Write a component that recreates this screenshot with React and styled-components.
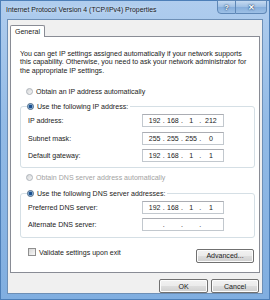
import styled, { createGlobalStyle } from "styled-components";

const GlobalStyle = createGlobalStyle`
  html, body {
    margin: 0;
    padding: 0;
    background: #ffffff;
  }
  * {
    box-sizing: border-box;
  }
`;

const ipRows = [
  { label: "IP address:", value: ["192", "168", "1", "212"] },
  { label: "Subnet mask:", value: ["255", "255", "255", "0"] },
  { label: "Default gateway:", value: ["192", "168", "1", "1"] },
];

const dnsRows = [
  { label: "Preferred DNS server:", value: ["192", "168", "1", "1"] },
  { label: "Alternate DNS server:", value: ["", "", "", ""] },
];

function IpField({ value }) {
  return (
    <Field>
      {value.map((part, i) => (
        <Octet key={i}>
          <span>{part}</span>
          {i < 3 && <Dot>.</Dot>}
        </Octet>
      ))}
    </Field>
  );
}

function Radio({ checked, disabled, children }) {
  return (
    <RadioLabel disabled={disabled}>
      <RadioCircle checked={checked} />
      {children}
    </RadioLabel>
  );
}

export default function App() {
  return (
    <>
      <GlobalStyle />
      <Window>
        <TitleBar>
          <Title>Internet Protocol Version 4 (TCP/IPv4) Properties</Title>
          <Controls>
            <CtrlButton wide={false}>?</CtrlButton>
            <CtrlButton wide>✕</CtrlButton>
          </Controls>
        </TitleBar>
        <Body>
          <Tabs>
            <Tab>General</Tab>
          </Tabs>
          <Panel>
            <Intro>
              You can get IP settings assigned automatically if your network supports
              this capability. Otherwise, you need to ask your network administrator
              for the appropriate IP settings.
            </Intro>
            <Standalone top={12}>
              <Radio>Obtain an IP address automatically</Radio>
            </Standalone>
            <Group top={6} bottom={2}>
              <Legend>
                <Radio checked>Use the following IP address:</Radio>
              </Legend>
              {ipRows.map((row) => (
                <Row key={row.label}>
                  <RowLabel>{row.label}</RowLabel>
                  <IpField value={row.value} />
                </Row>
              ))}
            </Group>
            <Standalone top={5}>
              <Radio disabled>Obtain DNS server address automatically</Radio>
            </Standalone>
            <Group top={7} bottom={3}>
              <Legend>
                <Radio checked>Use the following DNS server addresses:</Radio>
              </Legend>
              {dnsRows.map((row) => (
                <Row key={row.label}>
                  <RowLabel>{row.label}</RowLabel>
                  <IpField value={row.value} />
                </Row>
              ))}
            </Group>
            <BottomRow>
              <CheckLabel>
                <CheckBox />
                Validate settings upon exit
              </CheckLabel>
              <Button width={58}>Advanced...</Button>
            </BottomRow>
          </Panel>
          <Footer>
            <Button width={49}>OK</Button>
            <Button width={48}>Cancel</Button>
          </Footer>
        </Body>
      </Window>
    </>
  );
}

const Window = styled.div`
  width: 270px;
  height: 300px;
  display: flex;
  flex-direction: column;
  padding: 0 6px 5px 6px;
  background: linear-gradient(180deg, #b0cdee 0%, #93bbe6 40%, #80aee0 100%);
  border: 1px solid #4d7fb8;
  font-family: "Liberation Sans", Arial, sans-serif;
  font-size: 7.05px;
  color: #1b1b1b;
`;

const TitleBar = styled.div`
  height: 18px;
  display: flex;
  align-items: flex-start;
  justify-content: space-between;
`;

const Title = styled.div`
  padding-top: 5px;
  margin-left: -1px;
  font-size: 6.9px;
  color: #1a1a1a;
  text-shadow: 0 0 4px #e4effa;
`;

const Controls = styled.div`
  display: flex;
  margin-top: -1px;
  margin-right: -4px;
`;

const CtrlButton = styled.div`
  width: ${(p) => (p.wide ? 31 : 19)}px;
  height: 14px;
  display: flex;
  align-items: center;
  justify-content: center;
  border: 1px solid #5f88b7;
  border-left: ${(p) => (p.wide ? "none" : "1px solid #5f88b7")};
  border-radius: ${(p) => (p.wide ? "0 0 4px 0" : "0 0 0 4px")};
  background: linear-gradient(180deg, #c5daf1 0%, #9ebfe4 50%, #86aedb 51%, #9dc0e6 100%);
  color: #ffffff;
  font-size: 8px;
  font-weight: bold;
  text-shadow: 0 0 2px #1d3f68, 0 0 1px #1d3f68;
`;

const Body = styled.div`
  flex: 1;
  display: flex;
  flex-direction: column;
  padding: 5px 2px 0 2px;
  background: #f0f0f0;
  border: 1px solid #6d8fb6;
`;

const Tabs = styled.div`
  display: flex;
  height: 11px;
`;

const Tab = styled.div`
  width: 35px;
  height: 12px;
  display: flex;
  align-items: center;
  justify-content: center;
  background: #ffffff;
  border: 1px solid #898c95;
  border-bottom: none;
  border-radius: 2px 2px 0 0;
  position: relative;
  z-index: 1;
`;

const Panel = styled.div`
  height: 237px;
  display: flex;
  flex-direction: column;
  padding: 13px 9px 0 9px;
  background: #ffffff;
  border: 1px solid #898c95;
`;

const Intro = styled.p`
  margin: 0;
  line-height: 8.4px;
  width: 232px;
`;

const Standalone = styled.div`
  margin: ${(p) => p.top}px 0 0 6px;
  height: 9px;
  display: flex;
  align-items: center;
`;

const RadioLabel = styled.label`
  display: flex;
  align-items: center;
  gap: 3px;
  color: ${(p) => (p.disabled ? "#a3a3a3" : "#1b1b1b")};
  white-space: nowrap;
`;

const RadioCircle = styled.span`
  width: 7px;
  height: 7px;
  border-radius: 50%;
  border: 1px solid ${(p) => (p.checked ? "#3f5f80" : "#aeb4ba")};
  background: ${(p) =>
    p.checked
      ? "radial-gradient(circle, #1a4f8f 0 1.4px, #5a93c9 1.8px, #dfe9f3 2.6px)"
      : "linear-gradient(135deg, #d4d6d8, #f6f6f6)"};
  flex: none;
`;

const Group = styled.fieldset`
  margin: ${(p) => p.top}px 0 0 0;
  padding: 1px 0 ${(p) => p.bottom}px 7px;
  border: 1px solid #d5dfe5;
  border-radius: 3px;
  width: 235px;
`;

const Legend = styled.legend`
  padding: 0 2px 0 0;
  margin-left: -1px;
  height: 9px;
  display: flex;
  align-items: center;
`;

const Row = styled.div`
  height: 17.5px;
  display: flex;
  align-items: center;
  justify-content: space-between;
  padding-right: 30px;
`;

const RowLabel = styled.span`
  white-space: nowrap;
`;

const Field = styled.div`
  width: 82px;
  height: 13px;
  display: flex;
  align-items: center;
  padding: 0 3px 0 4px;
  border: 1px solid #c2c8ce;
  border-top-color: #abadb3;
  background: #ffffff;
`;

const Octet = styled.span`
  flex: 1;
  display: flex;
  justify-content: space-between;
  & > span:first-child {
    flex: 1;
    text-align: center;
  }
`;

const Dot = styled.span`
  width: 3px;
  text-align: center;
`;

const BottomRow = styled.div`
  margin-top: 11px;
  display: flex;
  align-items: center;
  justify-content: space-between;
  width: 234px;
`;

const CheckLabel = styled.label`
  display: flex;
  align-items: center;
  gap: 3px;
  margin-left: 8px;
  margin-top: -7px;
`;

const CheckBox = styled.span`
  width: 8px;
  height: 8px;
  border: 1px solid #8f8f8f;
  background: linear-gradient(135deg, #d6d6d6, #f8f8f8);
  flex: none;
`;

const Button = styled.div`
  width: ${(p) => p.width}px;
  height: 14px;
  display: flex;
  align-items: center;
  justify-content: center;
  border: 1px solid #707070;
  border-radius: 2px;
  background: linear-gradient(180deg, #f2f2f2 0%, #ebebeb 50%, #dddddd 51%, #cfcfcf 100%);
  box-shadow: inset 0 0 0 1px #fcfcfc;
  color: #1b1b1b;
`;

const Footer = styled.div`
  flex: 1;
  display: flex;
  justify-content: flex-end;
  align-items: flex-start;
  gap: 3px;
  padding: 6px 1px 0 0;
`;
